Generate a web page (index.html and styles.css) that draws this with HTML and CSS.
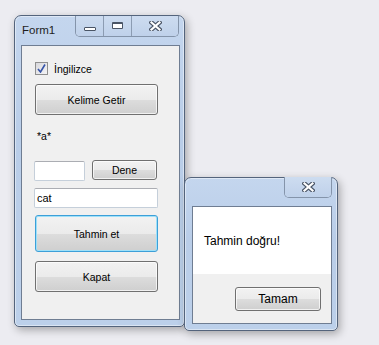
FILE: index.html
```html
<!DOCTYPE html>
<html lang="tr">
<head>
    <meta charset="UTF-8">
    <title>Form1</title>
    <link rel="stylesheet" href="styles.css">
</head>
<body>
    <div class="window form1">
        <div class="titlebar">
            <span class="caption">Form1</span>
            <div class="caption-buttons">
                <span class="cbtn min"><span class="min-glyph"></span></span>
                <span class="cbtn max"><span class="max-glyph"></span></span>
                <span class="cbtn close">
                    <svg width="13" height="10" viewBox="0 0 13 10"><path d="M2.5 1.5 L10.5 8.5 M10.5 1.5 L2.5 8.5" stroke="#4a5566" stroke-width="4.4" stroke-linecap="square"/><path d="M2.5 1.5 L10.5 8.5 M10.5 1.5 L2.5 8.5" stroke="#fff" stroke-width="2.2" stroke-linecap="square"/></svg>
                </span>
            </div>
        </div>
        <div class="client">
            <label class="check-row">
                <span class="checkbox">
                    <svg width="9" height="9" viewBox="0 0 9 9"><path d="M1 5 L3.5 8 L8 0.5" stroke="#3654a8" stroke-width="1.6" fill="none"/></svg>
                </span>
                İngilizce
            </label>
            <button class="btn big first">Kelime Getir</button>
            <div class="word">*a*</div>
            <div class="guess-row">
                <div class="textbox small"></div>
                <button class="btn dene">Dene</button>
            </div>
            <div class="textbox wide">cat</div>
            <button class="btn big tall focused">Tahmin et</button>
            <button class="btn big kapat">Kapat</button>
        </div>
    </div>

    <div class="window dialog">
        <div class="titlebar">
            <span></span>
            <div class="caption-buttons">
                <span class="cbtn close">
                    <svg width="13" height="10" viewBox="0 0 13 10"><path d="M2.5 1.5 L10.5 8.5 M10.5 1.5 L2.5 8.5" stroke="#4a5566" stroke-width="4.4" stroke-linecap="square"/><path d="M2.5 1.5 L10.5 8.5 M10.5 1.5 L2.5 8.5" stroke="#fff" stroke-width="2.2" stroke-linecap="square"/></svg>
                </span>
            </div>
        </div>
        <div class="client msg">
            <div class="msg-text">Tahmin doğru!</div>
            <div class="msg-footer">
                <button class="btn tamam">Tamam</button>
            </div>
        </div>
    </div>
</body>
</html>
```

FILE: styles.css
```css
body {
    margin: 0;
    width: 379px;
    height: 345px;
    background: #ececf1;
    font-family: "Liberation Sans", Arial, sans-serif;
    position: relative;
    overflow: hidden;
}
.window {
    position: absolute;
    box-sizing: border-box;
    border: 1px solid #54647c;
    border-radius: 7px 7px 5px 5px;
    background: linear-gradient(#c4d6ee, #b9cde8 40%, #bcd0ea);
    box-shadow: 2px 3px 8px rgba(0, 0, 0, 0.3), inset 0 0 0 1px rgba(255, 255, 255, 0.45);
    display: flex;
    flex-direction: column;
}
.form1 {
    left: 14px;
    top: 15px;
    width: 171px;
    height: 312px;
    padding: 0 4px 6px 6px;
}
.dialog {
    left: 184px;
    top: 177px;
    width: 154px;
    height: 154px;
    padding: 0 5px 6px 7px;
}
.titlebar {
    display: flex;
    justify-content: space-between;
    align-items: flex-start;
    height: 29px;
}
.dialog .titlebar {
    height: 28px;
}
.caption {
    margin: 8px 0 0 1px;
    font-size: 11.5px;
    color: #1e1e1e;
}
.caption-buttons {
    display: flex;
    height: 20px;
    margin-right: 1px;
    border: 1px solid #8494aa;
    border-top: none;
    border-radius: 0 0 5px 5px;
    box-shadow: inset 0 0 0 1px rgba(255, 255, 255, 0.5);
    overflow: hidden;
}
.dialog .caption-buttons {
    margin-top: -1px;
    margin-right: 0;
    height: 20px;
}
.cbtn {
    display: flex;
    align-items: center;
    justify-content: center;
    height: 100%;
    border-left: 1px solid #8c9cb2;
    background: linear-gradient(#cddcf0, #bfd1ea);
}
.cbtn:first-child {
    border-left: none;
}
.min {
    width: 27px;
}
.max {
    width: 27px;
}
.close {
    width: 46px;
}
.min-glyph {
    width: 10px;
    height: 2px;
    margin-top: 5px;
    background: #fff;
    border: 1px solid #4a5566;
    border-radius: 1px;
}
.max-glyph {
    width: 9px;
    height: 4px;
    margin-top: -1px;
    background: #fff;
    border: 1px solid #4a5566;
    border-top-width: 2px;
    border-radius: 1px;
}
.client {
    flex: 1;
    border: 1px solid #6f7d92;
    background: #f0f0f0;
    font-size: 10.5px;
    color: #000;
    display: flex;
    flex-direction: column;
    align-items: flex-start;
    padding: 16px 0 0 13px;
}
.check-row {
    display: flex;
    align-items: center;
    gap: 6px;
    height: 13px;
}
.checkbox {
    box-sizing: border-box;
    width: 13px;
    height: 13px;
    border: 1px solid #8f8f8f;
    background: linear-gradient(135deg, #d8d8dc, #f4f4f6);
    display: flex;
    align-items: center;
    justify-content: center;
}
.btn {
    box-sizing: border-box;
    font: inherit;
    color: #000;
    border: 1px solid #707070;
    border-radius: 3px;
    background: linear-gradient(#f2f2f2, #ebebeb 50%, #dddddd 50%, #cfcfcf);
    box-shadow: inset 0 0 0 1px rgba(255, 255, 255, 0.7);
    padding: 0;
}
.big {
    width: 123px;
    height: 31px;
}
.first {
    margin-top: 9px;
}
.word {
    margin: 15px 0 0 2px;
    height: 13px;
}
.guess-row {
    display: flex;
    align-items: flex-start;
    margin-top: 17px;
}
.textbox {
    box-sizing: border-box;
    height: 20px;
    margin-left: -1px;
    border: 1px solid #c5cfda;
    border-top-color: #abadb3;
    border-radius: 2px;
    background: #fff;
    padding: 3px 2px;
    font-size: 11px;
}
.small {
    width: 51px;
    margin-top: 1px;
}
.dene {
    width: 65px;
    height: 20px;
    margin-left: 7px;
}
.wide {
    width: 124px;
    margin-top: 7px;
}
.tall {
    height: 37px;
    margin-top: 7px;
}
.focused {
    border-color: #3c9fd8;
    box-shadow: inset 0 0 0 1px #9ee0f8;
}
.kapat {
    margin-top: 9px;
}
.msg {
    padding: 0;
    font-size: 12px;
    align-items: stretch;
}
.msg-text {
    background: #fff;
    height: 67px;
    padding: 27px 0 0 11px;
    box-sizing: border-box;
}
.msg-footer {
    flex: 1;
    display: flex;
    justify-content: flex-end;
    padding: 13px 10px 0 0;
}
.tamam {
    width: 86px;
    height: 24px;
    font-size: 12px;
}
```
